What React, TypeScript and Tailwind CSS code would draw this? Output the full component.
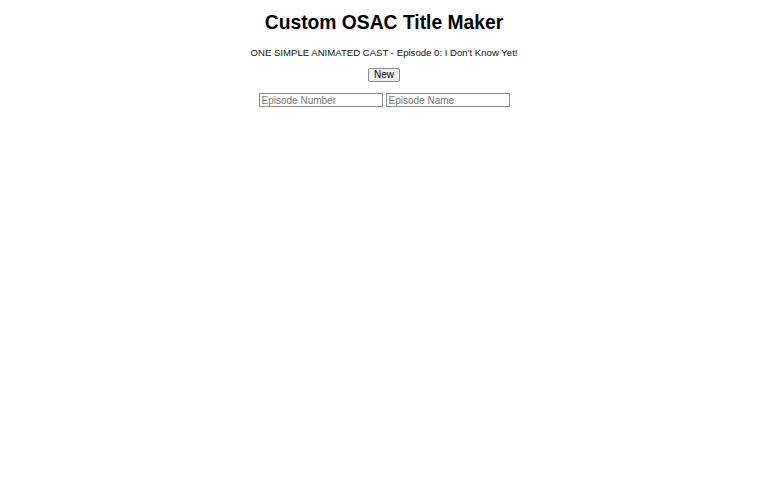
export default function App() {
  return (
    <div className="min-h-[480px] w-full bg-white text-black" style={{ fontFamily: '"Liberation Sans", Arial, sans-serif' }}>
      <div className="flex flex-col items-center pt-[12px]">
        <h1 className="text-[19.3px] font-bold leading-[22px]">Custom OSAC Title Maker</h1>
        <p className="mt-[13px] text-[9.6px] leading-[12px] text-[#111]">ONE SIMPLE ANIMATED CAST - Episode 0: I Don't Know Yet!</p>
        <button className="mt-[9px] h-[14px] rounded-[2px] border border-[#8a8a8a] bg-[#efefef] px-[5px] text-[10px] leading-[12px]">New</button>
        <div className="mt-[11px] flex gap-[3px]">
          <input placeholder="Episode Number" className="h-[14px] w-[124px] border border-[#8f8f8f] px-[2px] text-[10px] leading-[12px] placeholder:text-[#757575]" />
          <input placeholder="Episode Name" className="h-[14px] w-[124px] border border-[#8f8f8f] px-[2px] text-[10px] leading-[12px] placeholder:text-[#757575]" />
        </div>
      </div>
    </div>
  );
}
